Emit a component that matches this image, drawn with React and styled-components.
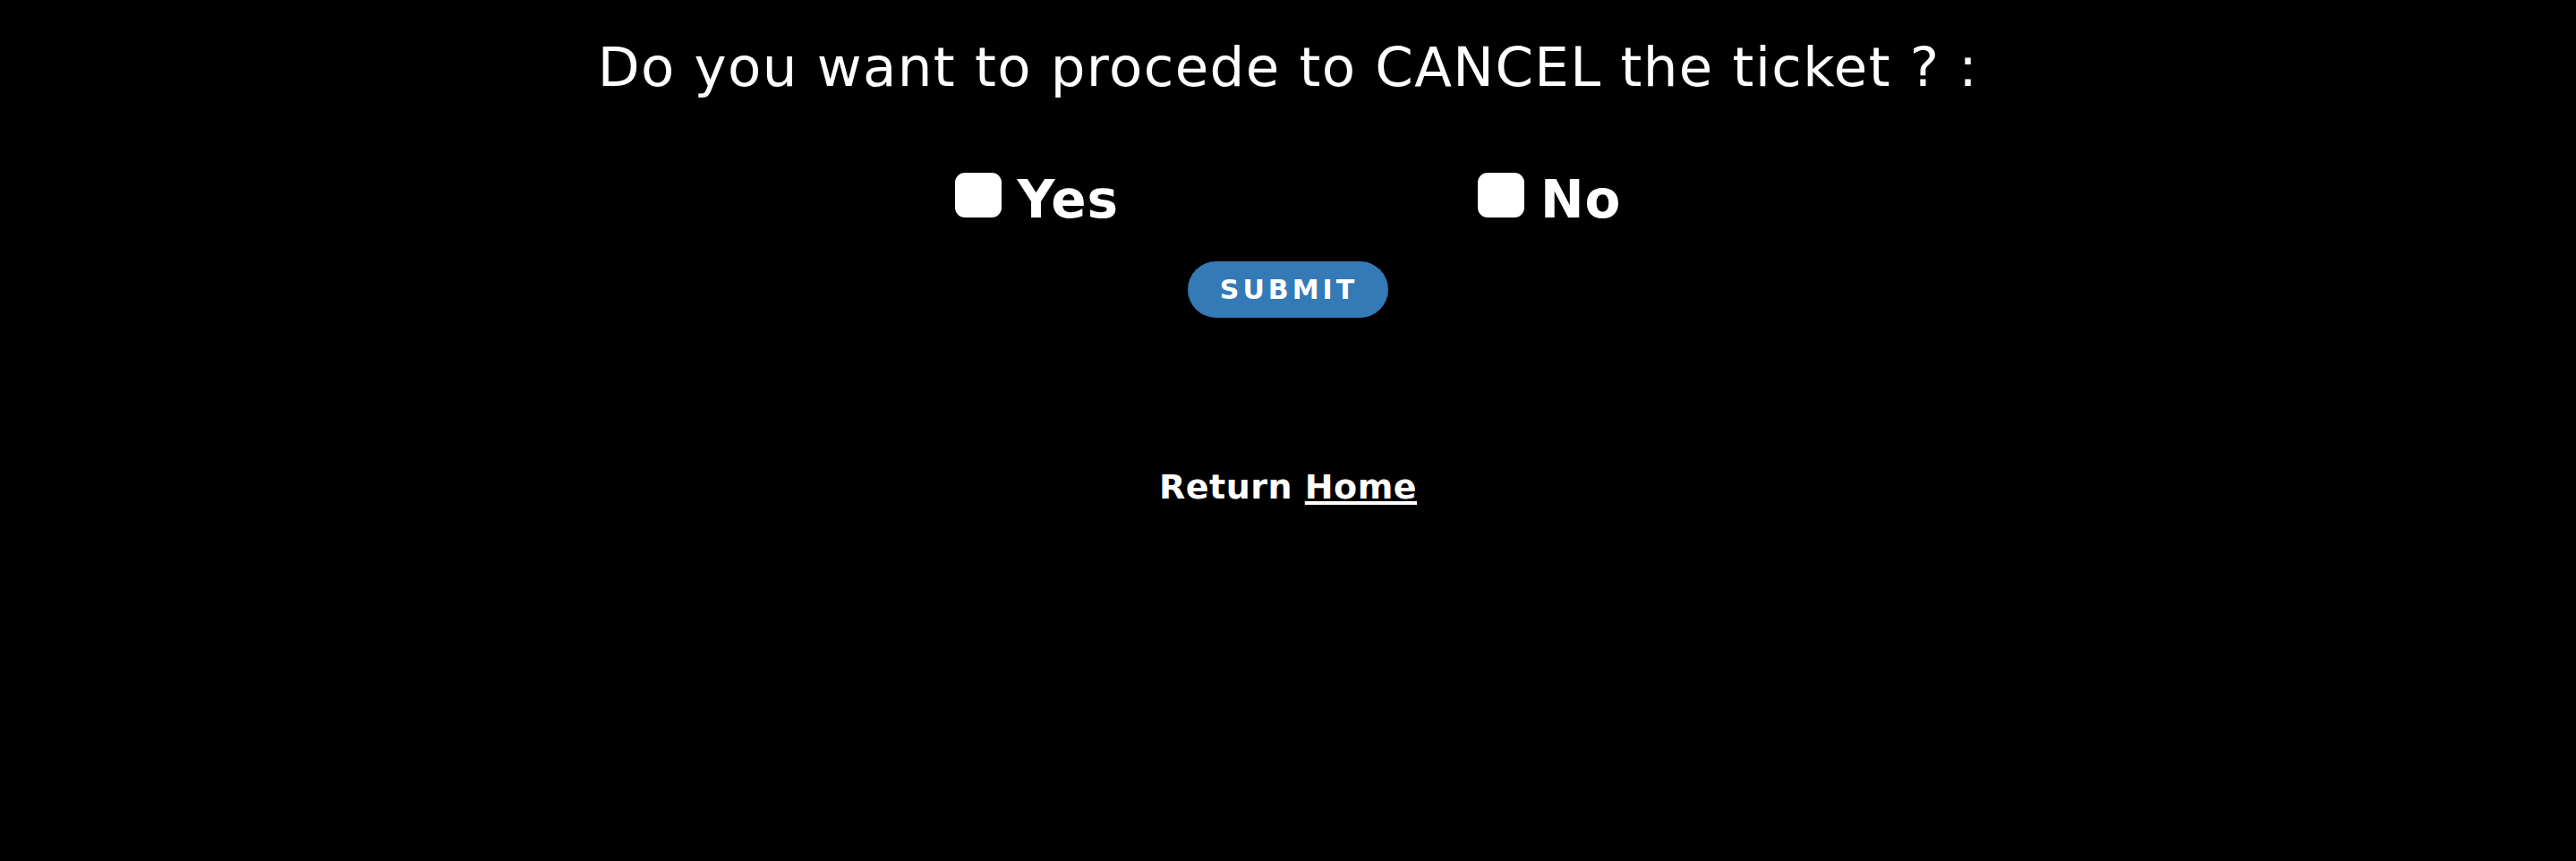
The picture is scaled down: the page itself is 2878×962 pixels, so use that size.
import React from 'react';
import styled, { createGlobalStyle } from 'styled-components';

const GlobalStyle = createGlobalStyle`
  html, body {
    margin: 0;
    padding: 0;
    background: #000;
  }
  body {
    font-family: "DejaVu Sans", "Liberation Sans", sans-serif;
    color: #fff;
  }
`;

const Page = styled.main`
  min-height: 962px;
  display: flex;
  flex-direction: column;
  align-items: center;
  background: #000;
`;

const Question = styled.h1`
  margin: 44px 0 0;
  font-size: 61px;
  font-weight: 400;
  letter-spacing: 1.4px;
  line-height: 1;
  color: #fff;
`;

const Choices = styled.form`
  display: flex;
  flex-direction: column;
  align-items: center;
`;

const OptionRow = styled.div`
  display: flex;
  align-items: baseline;
  gap: 401px;
  margin-top: 88px;
`;

const Option = styled.label`
  display: flex;
  align-items: baseline;
  gap: 18px;
  font-size: 58px;
  font-weight: 700;
  letter-spacing: 1px;
  line-height: 1;
  cursor: pointer;
`;

const Box = styled.input`
  appearance: none;
  margin: 0;
  width: 52px;
  height: 50px;
  border-radius: 11px;
  background: #fff;
  border: none;
  cursor: pointer;
`;

const SubmitButton = styled.button`
  margin-top: 40px;
  width: 224px;
  height: 63px;
  padding: 0 0 0 2px;
  border: none;
  border-radius: 32px;
  background: #337ab7;
  color: #fff;
  font-family: "DejaVu Sans", "Liberation Sans", sans-serif;
  font-size: 30px;
  font-weight: 700;
  letter-spacing: 4px;
  cursor: pointer;
`;

const ReturnLine = styled.p`
  margin: 170px 0 0;
  font-size: 38px;
  font-weight: 700;
  letter-spacing: 0.5px;
  line-height: 1;
`;

const HomeLink = styled.a`
  color: #fff;
  text-decoration: underline;
  text-decoration-thickness: 4px;
  text-underline-offset: 3px;
`;

const App = () => (
  <>
    <GlobalStyle />
    <Page>
      <Question>Do you want to procede to CANCEL the ticket ? :</Question>
      <Choices onSubmit={(e) => e.preventDefault()}>
        <OptionRow>
          <Option>
            <Box type="checkbox" name="yes" />
            Yes
          </Option>
          <Option>
            <Box type="checkbox" name="no" />
            No
          </Option>
        </OptionRow>
        <SubmitButton type="submit">SUBMIT</SubmitButton>
      </Choices>
      <ReturnLine>
        Return <HomeLink href="#">Home</HomeLink>
      </ReturnLine>
    </Page>
  </>
);

export default App;
